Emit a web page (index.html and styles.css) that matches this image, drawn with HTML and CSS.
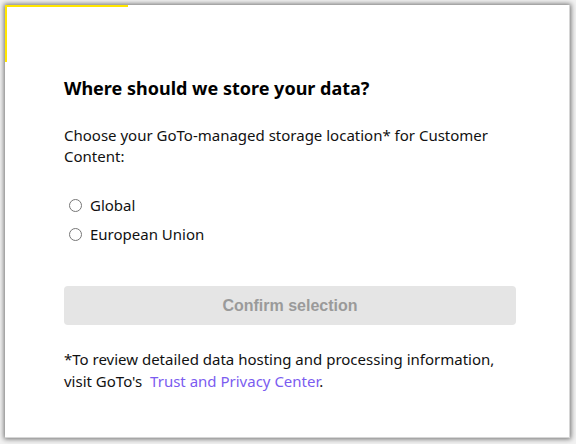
FILE: index.html
```html
<!DOCTYPE html>
<html lang="en">
<head>
<meta charset="utf-8">
<title>Where should we store your data?</title>
<link rel="stylesheet" href="styles.css">
</head>
<body>
<div class="frame">
  <div class="card">
    <span class="accent-top"></span>
    <span class="accent-left"></span>
    <div class="content">
      <h1 class="title">Where should we store your data?</h1>
      <p class="intro">Choose your GoTo-managed storage location* for Customer Content:</p>
      <div class="options">
        <label class="option"><input type="radio" name="region" class="radio"><span>Global</span></label>
        <label class="option"><input type="radio" name="region" class="radio"><span>European Union</span></label>
      </div>
      <button class="confirm" disabled>Confirm selection</button>
      <p class="note">*To review detailed data hosting and processing information, visit GoTo's <a class="link" href="#">Trust and Privacy Center</a>.</p>
    </div>
  </div>
</div>
</body>
</html>
```
FILE: styles.css
```css
html, body {
  margin: 0;
  padding: 0;
}
body {
  width: 576px;
  height: 444px;
  background: #fff;
  font-family: "Noto Sans", "Open Sans", sans-serif;
  color: #111;
  overflow: hidden;
}
.frame {
  box-sizing: border-box;
  width: 576px;
  height: 444px;
  padding: 5px 6px 5px 5px;
  background: #f2f2f2;
}
.card {
  position: relative;
  box-sizing: border-box;
  height: 433px;
  background: #fff;
  border-right: 1px solid #d6d6d6;
  border-bottom: 1px solid #d6d6d6;
  box-shadow: 0 0 5px 1px rgba(0, 0, 0, 0.55);
}
.accent-top {
  position: absolute;
  left: 0;
  top: 0;
  width: 123px;
  height: 2px;
  background: #ffe600;
}
.accent-left {
  position: absolute;
  left: 0;
  top: 0;
  width: 2px;
  height: 57px;
  background: #ffe600;
}
.content {
  padding: 71px 53px 0 59px;
}
.title {
  margin: 0 0 25px;
  font-size: 18px;
  line-height: 24px;
  font-weight: 700;
  color: #000;
}
.intro {
  margin: 0 0 28px;
  font-size: 15px;
  line-height: 21px;
  color: #111;
}
.options {
  display: flex;
  flex-direction: column;
  gap: 8px;
  margin-bottom: 41px;
}
.option {
  display: flex;
  align-items: center;
  gap: 8px;
  font-size: 15px;
  line-height: 21px;
}
.radio {
  margin: 0 0 0 5px;
  width: 13px;
  height: 13px;
}
.confirm {
  display: block;
  width: 100%;
  height: 39px;
  border: 0;
  border-radius: 4px;
  background: #e5e5e5;
  color: #9a9a9a;
  font-family: "Liberation Sans", Arial, sans-serif;
  font-weight: 700;
  font-size: 16px;
  margin-bottom: 23px;
}
.note {
  margin: 0;
  font-size: 15px;
  line-height: 22px;
  color: #111;
}
.link {
  margin-left: 4px;
  color: #7b5cf0;
  text-decoration: none;
}
```
